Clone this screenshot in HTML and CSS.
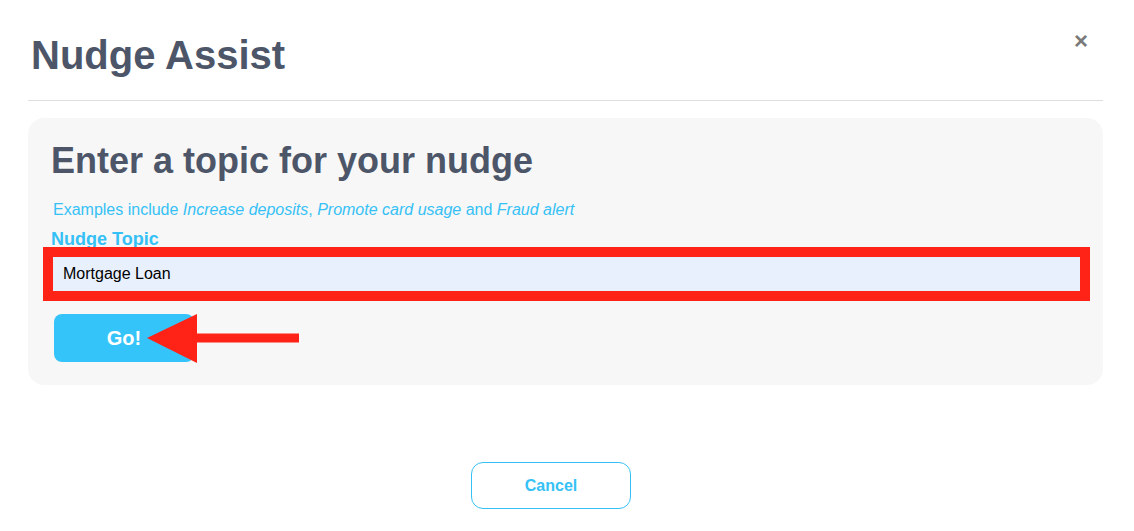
FILE: index.html
```html
<!DOCTYPE html>
<html>
<head>
<meta charset="utf-8">
<link rel="stylesheet" href="styles.css">
</head>
<body>
<div class="modal">
  <header class="modal-header">
    <h1 class="modal-title">Nudge Assist</h1>
    <button class="close" aria-label="Close">&times;</button>
  </header>
  <section class="panel">
    <h2 class="panel-title">Enter a topic for your nudge</h2>
    <p class="hint">Examples include <em>Increase deposits</em>, <em>Promote card usage</em> and <em>Fraud alert</em></p>
    <label class="field-label" for="topic">Nudge Topic</label>
    <input id="topic" class="topic-input" type="text" value="Mortgage Loan">
    <div class="go-row">
      <button class="go-btn">Go!</button>
      <svg class="arrow" width="160" height="52" viewBox="0 0 160 52">
        <polygon points="0,25 50,1 50,20.5 152,20.5 152,29.5 50,29.5 50,50" fill="#ff2216"/>
      </svg>
    </div>
  </section>
  <footer class="modal-footer">
    <button class="cancel-btn">Cancel</button>
  </footer>
</div>
</body>
</html>
```
FILE: styles.css
```css
* { box-sizing: border-box; }
html, body { margin: 0; padding: 0; background: #fff; }
body { font-family: "Liberation Sans", Arial, sans-serif; }

.modal {
  width: 1134px;
  height: 531px;
  padding: 0 31px 0 28px;
}

.modal-header {
  display: flex;
  justify-content: space-between;
  align-items: flex-start;
  padding: 32px 0 22px 3px;
  border-bottom: 1px solid #dedede;
}
.modal-title {
  margin: 0;
  font-size: 40px;
  line-height: 46px;
  font-weight: 700;
  color: #4d5669;
}
.close {
  margin: -3px 15px 0 0;
  padding: 0;
  border: 0;
  background: none;
  font-family: "Liberation Sans", Arial, sans-serif;
  font-size: 24px;
  line-height: 24px;
  font-weight: 700;
  color: #7a7a7a;
  cursor: pointer;
}

.panel {
  margin-top: 17px;
  background: #f7f7f7;
  border-radius: 16px;
  padding: 22px 22px 24px 23px;
  height: 267px;
}
.panel-title {
  margin: 0;
  font-size: 36px;
  line-height: 41px;
  font-weight: 700;
  color: #4d5669;
}
.hint {
  margin: 20px 0 0 2px;
  font-size: 16px;
  line-height: 18px;
  color: #35c1f5;
}
.field-label {
  display: block;
  margin-top: 10px;
  font-size: 18px;
  line-height: 21px;
  font-weight: 700;
  color: #35c1f5;
}
.topic-input {
  display: block;
  margin: 7px 0 0 2px;
  width: 1027px;
  height: 34px;
  padding: 0 10px;
  border: 0;
  background: #e8f0fe;
  font-family: "Liberation Sans", Arial, sans-serif;
  font-size: 16px;
  color: #000;
  outline: 10px solid #ff2216;
}
.go-row {
  position: relative;
  margin-top: 23px;
  padding-left: 3px;
}
.go-btn {
  display: block;
  width: 140px;
  height: 48px;
  border: 0;
  border-radius: 8px;
  background: #35c4fa;
  color: #fff;
  font-family: "Liberation Sans", Arial, sans-serif;
  font-size: 20px;
  font-weight: 700;
  cursor: pointer;
}
.arrow {
  position: absolute;
  left: 96px;
  top: -1px;
}

.modal-footer {
  display: flex;
  justify-content: center;
  padding-right: 29px;
  margin-top: 77px;
}
.cancel-btn {
  width: 160px;
  height: 47px;
  border: 1px solid #35c1f5;
  border-radius: 12px;
  background: #fff;
  color: #35c1f5;
  font-family: "Liberation Sans", Arial, sans-serif;
  font-size: 16px;
  font-weight: 700;
  cursor: pointer;
}
```
